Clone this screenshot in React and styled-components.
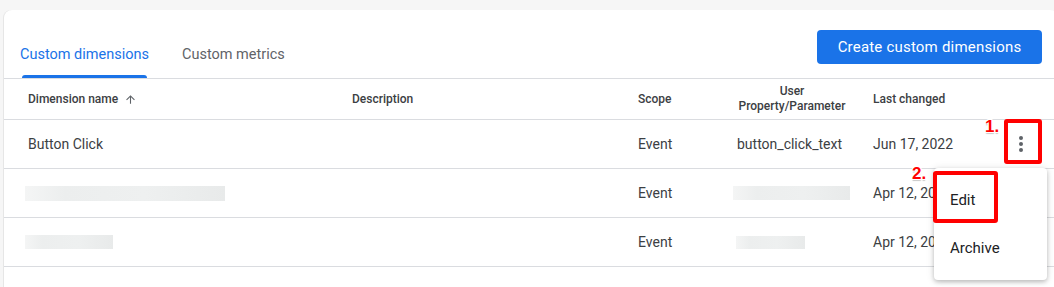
import styled, { createGlobalStyle } from "styled-components";

const GlobalStyle = createGlobalStyle`
  html, body {
    margin: 0;
    padding: 0;
    background: #f6f6f6;
    overflow: hidden;
    font-family: Roboto, "Liberation Sans", sans-serif;
  }
`;

const Page = styled.div`
  padding: 10px 0 0 4px;
  width: 1054px;
  height: 287px;
  box-sizing: border-box;
  overflow: hidden;
`;

const Card = styled.div`
  width: 1054px;
  height: 277px;
  background: #fff;
  border-radius: 8px 8px 0 0;
  box-shadow: -1px 0 0 #e6e6e6;
`;

const TabBar = styled.div`
  display: flex;
  align-items: flex-end;
  height: 69px;
  border-bottom: 1px solid #dadce0;
  box-sizing: border-box;
  padding-left: 16px;
  gap: 33px;
`;

const Tab = styled.div`
  position: relative;
  height: 35px;
  padding-top: 2px;
  box-sizing: border-box;
  font-size: 14.5px;
  line-height: 20px;
  color: ${(p) => (p.$active ? "#1a73e8" : "#5f6368")};

  &::after {
    content: "";
    display: ${(p) => (p.$active ? "block" : "none")};
    position: absolute;
    left: 2px;
    right: 2px;
    bottom: 0;
    height: 3px;
    border-radius: 3px 3px 0 0;
    background: #1a73e8;
  }
`;

const Spacer = styled.div`
  flex: 1;
`;

const CreateButton = styled.button`
  align-self: flex-start;
  margin: 20px 16px 0 0;
  height: 34px;
  width: 225px;
  border: none;
  border-radius: 4px;
  background: #1a73e8;
  color: #fff;
  font-family: Roboto, "Liberation Sans", sans-serif;
  font-size: 15px;
  font-weight: 400;
  letter-spacing: 0.2px;
  cursor: pointer;
`;

const Row = styled.div`
  display: grid;
  grid-template-columns: 324px 286px 99px 136px 140px 1fr;
  height: ${(p) => (p.$head ? "41px" : "49px")};
  border-bottom: 1px solid #dadce0;
  box-sizing: border-box;
  align-items: center;
`;

const HeadCell = styled.div`
  padding-left: 24px;
  font-size: 12px;
  font-weight: 500;
  color: #3c4043;
  display: flex;
  align-items: center;
  gap: 6px;
  ${(p) =>
    p.$center &&
    `
    flex-direction: column;
    gap: 0;
    line-height: 15px;
    align-items: center;
    width: 110px;
  `}
`;

const Cell = styled.div`
  padding-left: 24px;
  font-size: 14px;
  color: #3c4043;
  position: relative;
`;

const Blur = styled.div`
  width: ${(p) => p.$w}px;
  height: ${(p) => p.$h || 15}px;
  margin-left: ${(p) => p.$ml || 0}px;
  background: linear-gradient(
    90deg,
    #f4f5f5 0%,
    #eceeee 20%,
    #eef0f0 60%,
    #e8eaea 100%
  );
`;

const ActionCell = styled.div`
  position: relative;
  height: 100%;
`;

const Kebab = styled.div`
  position: absolute;
  left: 30px;
  top: 16px;
  width: 4px;
  height: 16px;
  display: flex;
  flex-direction: column;
  justify-content: space-between;

  span {
    width: 4px;
    height: 4px;
    border-radius: 50%;
    background: #5f6368;
  }
`;

const RedBox = styled.div`
  position: absolute;
  left: ${(p) => p.$x}px;
  top: ${(p) => p.$y}px;
  width: ${(p) => p.$w}px;
  height: ${(p) => p.$h}px;
  border: 4px solid #ff0000;
  border-radius: 3px;
  box-sizing: border-box;
  z-index: 3;
`;

const StepLabel = styled.div`
  position: absolute;
  left: ${(p) => p.$x}px;
  top: ${(p) => p.$y}px;
  font-family: "Liberation Sans", Arial, sans-serif;
  font-size: 17px;
  font-weight: 700;
  color: #ff0000;
  text-shadow: -1px -1px 0 #fff, 1px -1px 0 #fff, -1px 1px 0 #fff,
    1px 1px 0 #fff, 0 2px 1px #c8c8c8;
  z-index: 4;
`;

const Menu = styled.div`
  position: absolute;
  left: -55px;
  top: 48px;
  width: 113px;
  height: 112px;
  background: #fff;
  border-radius: 4px;
  box-shadow: 0 2px 4px rgba(0, 0, 0, 0.2), 0 1px 8px rgba(0, 0, 0, 0.12);
  padding-top: 8px;
  box-sizing: border-box;
  z-index: 2;
`;

const MenuItem = styled.div`
  height: 48px;
  display: flex;
  align-items: center;
  padding-left: 16px;
  font-size: 15px;
  color: #202124;
`;

const SortArrow = () => (
  <svg width="13" height="13" viewBox="0 0 24 24">
    <path d="M4 12l1.41 1.41L11 7.83V20h2V7.83l5.58 5.59L20 12l-8-8-8 8z" fill="#5f6368" />
  </svg>
);

export default function App() {
  return (
    <Page>
      <GlobalStyle />
      <Card>
        <TabBar>
          <Tab $active>Custom dimensions</Tab>
          <Tab>Custom metrics</Tab>
          <Spacer />
          <CreateButton>Create custom dimensions</CreateButton>
        </TabBar>

        <Row $head>
          <HeadCell>
            Dimension name <SortArrow />
          </HeadCell>
          <HeadCell>Description</HeadCell>
          <HeadCell>Scope</HeadCell>
          <HeadCell $center>
            <span>User</span>
            <span>Property/Parameter</span>
          </HeadCell>
          <HeadCell>Last changed</HeadCell>
          <div />
        </Row>

        <Row>
          <Cell>Button Click</Cell>
          <Cell />
          <Cell>Event</Cell>
          <Cell>button_click_text</Cell>
          <Cell>Jun 17, 2022</Cell>
          <ActionCell>
            <Kebab>
              <span />
              <span />
              <span />
            </Kebab>
            <StepLabel $x={-4} $y={-3}>1.</StepLabel>
            <RedBox $x={15} $y={-1} $w={38} $h={45} />
            <Menu>
              <MenuItem>Edit</MenuItem>
              <MenuItem>Archive</MenuItem>
              <StepLabel $x={-22} $y={-4}>2.</StepLabel>
              <RedBox $x={-1} $y={3} $w={65} $h={52} />
            </Menu>
          </ActionCell>
        </Row>

        <Row>
          <Cell>
            <Blur $w={200} $ml={-3} />
          </Cell>
          <Cell />
          <Cell>Event</Cell>
          <Cell>
            <Blur $w={117} $ml={-4} $h={14} />
          </Cell>
          <Cell>Apr 12, 2022</Cell>
          <div />
        </Row>

        <Row>
          <Cell>
            <Blur $w={88} $ml={-3} $h={14} />
          </Cell>
          <Cell />
          <Cell>Event</Cell>
          <Cell>
            <Blur $w={69} $ml={-1} $h={13} />
          </Cell>
          <Cell>Apr 12, 2022</Cell>
          <div />
        </Row>
      </Card>
    </Page>
  );
}
